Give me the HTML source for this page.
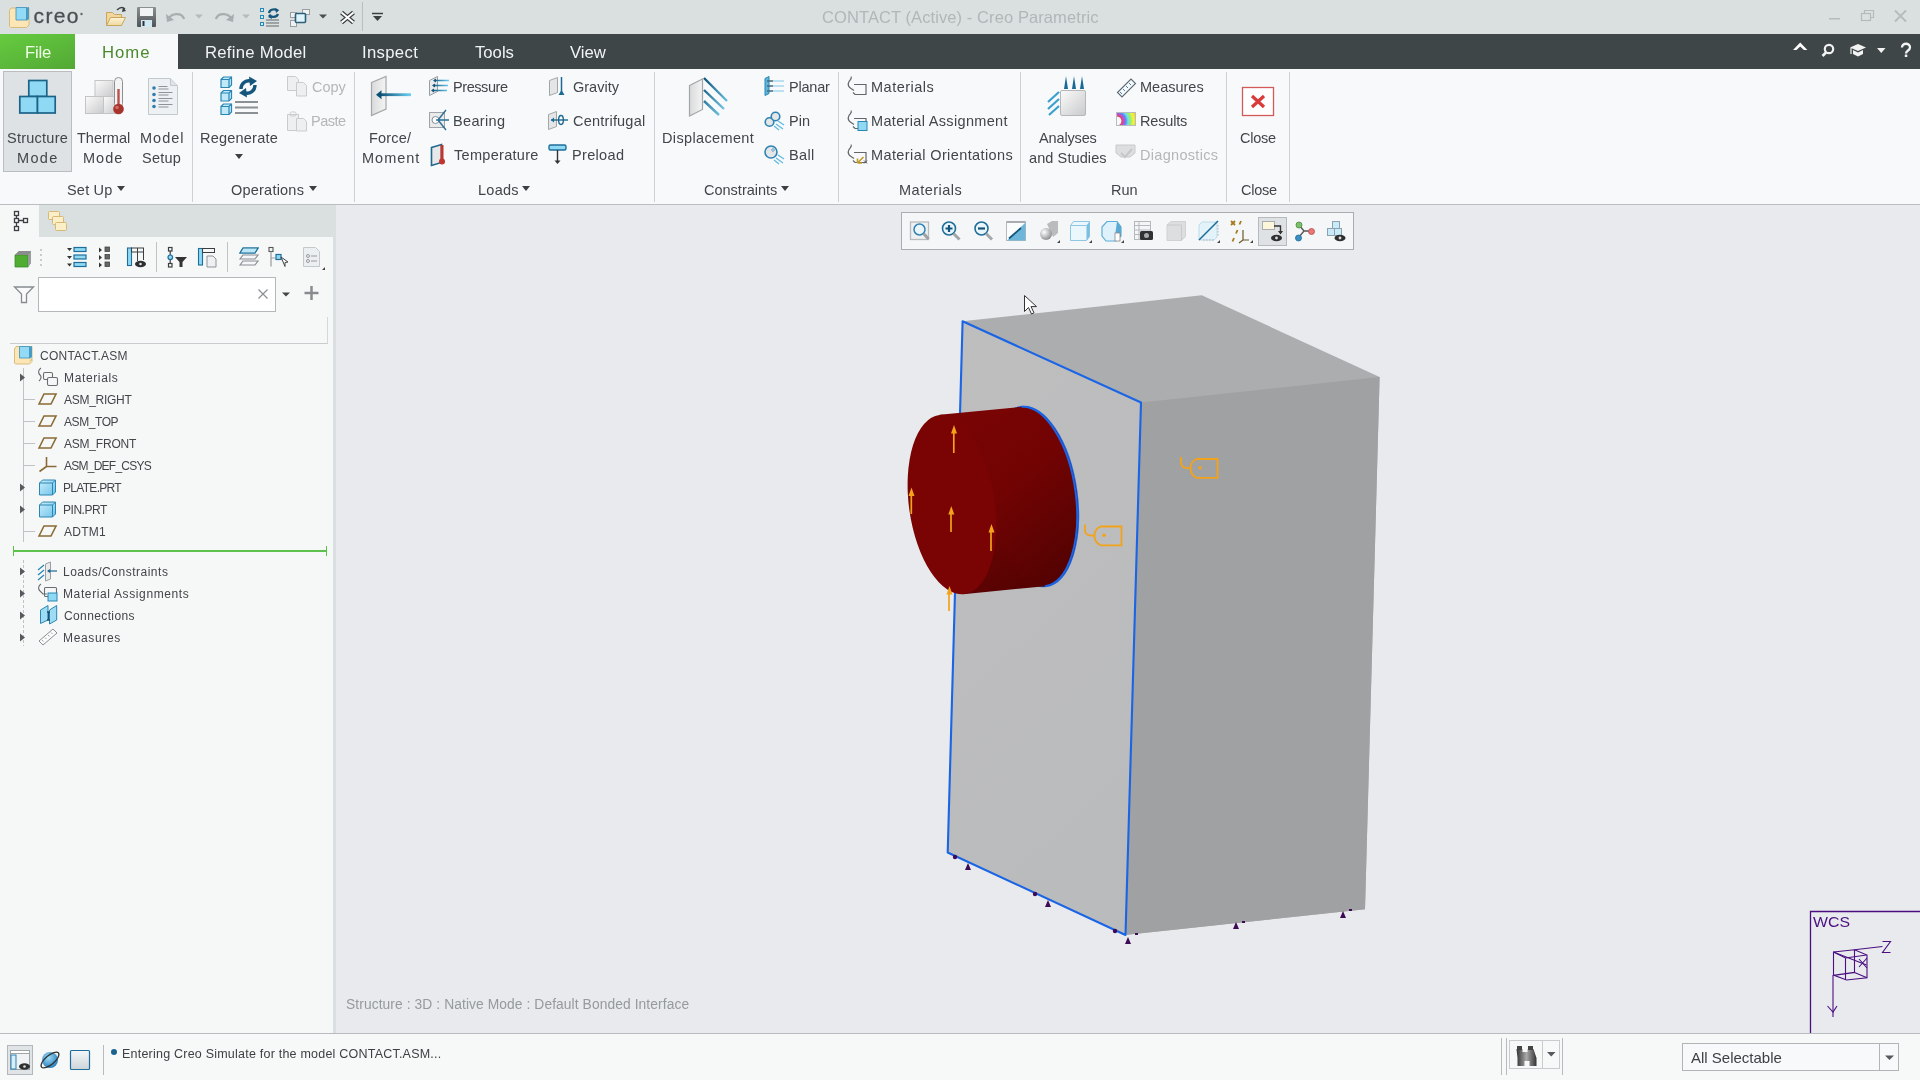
<!DOCTYPE html>
<html><head><meta charset="utf-8">
<style>
*{margin:0;padding:0;box-sizing:border-box}
html,body{width:1920px;height:1080px;overflow:hidden;background:#e8eaed;font-family:"Liberation Sans",sans-serif}
.a{position:absolute}
.t{position:absolute;white-space:nowrap;line-height:1;will-change:transform}
.rb{font-size:14.5px;color:#42464a}
.tb{font-size:16.7px;color:#f2f4f4}
.tr{font-size:12px;color:#42464a}
svg{position:absolute;overflow:visible}
</style></head><body>
<!-- title bar -->
<div class="a" style="left:0;top:0;width:1920px;height:34px;background:#d9e0df"></div>
<div class="t" style="left:821.5px;top:9px;font-size:16.5px;color:#b1b7b8;letter-spacing:0.09px">CONTACT (Active) - Creo Parametric</div>

<!-- tab bar -->
<div class="a" style="left:0;top:34px;width:1920px;height:35px;background:#3e4648"></div>
<div class="a" style="left:0;top:34px;width:75px;height:35px;background:linear-gradient(160deg,#66cc40,#52a834)"></div>
<div class="a" style="left:75px;top:34px;width:103px;height:35px;background:#f7f9fa"></div>
<div class="t tb" style="top:45px;left:24.6px;color:#efffe6;letter-spacing:-0.20px">File</div>
<div class="t tb" style="top:45px;left:102.0px;color:#4b8a2c;letter-spacing:1.00px">Home</div>
<div class="t tb" style="top:45px;left:205.0px;letter-spacing:0.27px">Refine Model</div>
<div class="t tb" style="top:45px;left:362.0px;letter-spacing:0.33px">Inspect</div>
<div class="t tb" style="top:45px;left:475.0px;letter-spacing:0.00px">Tools</div>
<div class="t tb" style="top:45px;left:570.0px;letter-spacing:0.00px">View</div>


<svg style="left:0;top:0" width="1920" height="70">
<defs>
<linearGradient id="gfold" x1="0" y1="0" x2="0" y2="1"><stop offset="0" stop-color="#fdf3d6"/><stop offset="1" stop-color="#f0d9a0"/></linearGradient>
<linearGradient id="gsave" x1="0" y1="0" x2="0" y2="1"><stop offset="0" stop-color="#8c9093"/><stop offset="1" stop-color="#4f5356"/></linearGradient>
</defs>
<!-- creo logo -->
<path d="M11 8h18v17l-2.5 2.5h-16l-1-1v-16z" fill="#fce6b6" stroke="#d9bb7c" stroke-width="1"/>
<rect x="16" y="7.5" width="11" height="12.5" fill="#92daf5"/>
<path d="M26.5 7.5l2.5-0.5v12l-2.5 2z" fill="#4a9cc8"/>
<path d="M16 7.5h10.5v12.5h-10.5z" fill="none" stroke="#3a8fbe" stroke-width=".8"/>
<text x="33.5" y="23" font-family="Liberation Sans" font-size="21" fill="#4a4e51" stroke="#4a4e51" stroke-width="0.3" letter-spacing="1.4">creo</text>
<circle cx="81.5" cy="14" r="1.2" fill="#666"/>
<!-- open folder -->
<path d="M106.5 12.5h6l2 2h7v11h-15z" fill="#f1d79c" stroke="#c9a660"/>
<path d="M106.5 25.5l4-8h15l-4 8z" fill="url(#gfold)" stroke="#c9a660"/>
<path d="M117 10c3-3 6-3 8-1" fill="none" stroke="#3c4043" stroke-width="1.4"/><path d="M123 7l3 4-4 1z" fill="#3c4043"/>
<!-- save -->
<rect x="137" y="7" width="19" height="20" rx="1" fill="url(#gsave)"/>
<rect x="140" y="8" width="13" height="8" fill="#f2f3f4"/>
<rect x="141" y="20" width="11" height="7" fill="#cfe8f4"/><rect x="142.5" y="21" width="2" height="5" fill="#333"/>
<!-- undo / redo (disabled) -->
<path d="M169 19c2-6 13-7 15 0" fill="none" stroke="#a8adb0" stroke-width="2.4"/><path d="M166 14l1 8 7-2z" fill="#a8adb0"/>
<path d="M195 14.5h8l-4 4z" fill="#b5babd"/>
<path d="M231 19c-2-6-13-7-15 0" fill="none" stroke="#a8adb0" stroke-width="2.4"/><path d="M234 14l-1 8-7-2z" fill="#a8adb0"/>
<path d="M242 14.5h8l-4 4z" fill="#b5babd"/>
<!-- regen -->
<g fill="#c9ecf9" stroke="#2a86b4" stroke-width="1"><rect x="260.5" y="8.5" width="3" height="3"/><rect x="260.5" y="15.5" width="3" height="3"/><rect x="260.5" y="22.5" width="3" height="3"/></g>
<path d="M269 13a5 4 0 0 1 9-2M278 14a5 4 0 0 1 -9 1" fill="none" stroke="#15577c" stroke-width="2.2"/>
<path d="M275 8l4 2-3 3zM272 19l-4-2 3-3z" fill="#15577c"/>
<g stroke="#8a9094" stroke-width="1.6"><path d="M266 20h13M266 23h13M266 26h13"/></g>
<!-- windows -->
<g fill="#f0f1f2" stroke="#9a9ea1" stroke-width="1"><rect x="290.5" y="12.5" width="6" height="5"/><rect x="290.5" y="20.5" width="6" height="6"/><rect x="302.5" y="9.5" width="7" height="5"/></g>
<rect x="295.5" y="13.5" width="10" height="9" rx="1" fill="#dff3fb" stroke="#2d5f7c" stroke-width="1.6"/>
<path d="M319 14.5h8l-4 4z" fill="#4a4e51"/>
<!-- close x -->
<path d="M341.5 12.5l12 10M353.5 12.5l-12 10" stroke="#3c4043" stroke-width="4.4"/>
<path d="M341.5 12.5l12 10M353.5 12.5l-12 10" stroke="#fff" stroke-width="2"/>
<rect x="362" y="2" width="1" height="29" fill="#b9bfc1"/>
<path d="M372 13.5h11" stroke="#3c4043" stroke-width="1.5"/><path d="M373 16h9l-4.5 5z" fill="#3c4043"/>
<!-- window controls -->
<rect x="1829" y="18" width="11" height="1.5" fill="#b5bbbd"/>
<g fill="none" stroke="#b5bbbd" stroke-width="1.2"><rect x="1861.5" y="13.5" width="9" height="7"/><path d="M1864.5 13.5v-3h9v7h-3"/></g>
<path d="M1895 10.5l11 11M1906 10.5l-11 11" stroke="#b5bbbd" stroke-width="1.8"/>
<!-- tab bar right icons -->
<path d="M1793 50l7.2-7.5 7.2 7.5h-3.5l-3.7-3.5-3.7 3.5z" fill="#fff"/>
<circle cx="1829" cy="49" r="4.2" fill="none" stroke="#f2f2f2" stroke-width="2.2"/>
<path d="M1826 52.5l-3.5 3.5" stroke="#f2f2f2" stroke-width="2.6"/>
<path d="M1850 47.5l8-3.5 8 3.5-8 3.5z" fill="#f2f2f2"/><path d="M1853 50v4l5 2.5 5-2.5v-4l-5 2.5z" fill="#f2f2f2"/><path d="M1851 48v6" stroke="#f2f2f2" stroke-width="1.2"/>
<path d="M1877 48h8.5l-4.25 5z" fill="#f2f2f2"/>
<path d="M1902 47.5c0-5 8-5 8 0 0 3-4 3-4 6" fill="none" stroke="#f4f4f4" stroke-width="2.3"/><rect x="1904.8" y="54.5" width="2.5" height="2.5" fill="#f4f4f4"/>
</svg>

<!-- ribbon -->
<div class="a" style="left:0;top:69px;width:1920px;height:135px;background:#f7f9fa"></div>
<div class="a" style="left:0;top:204px;width:1920px;height:1px;background:#b9bec0"></div>


<!-- ribbon separators -->
<div class="a" style="left:192px;top:72px;width:1px;height:130px;background:#cdd1d3"></div>
<div class="a" style="left:354px;top:72px;width:1px;height:130px;background:#cdd1d3"></div>
<div class="a" style="left:654px;top:72px;width:1px;height:130px;background:#cdd1d3"></div>
<div class="a" style="left:838px;top:72px;width:1px;height:130px;background:#cdd1d3"></div>
<div class="a" style="left:1020px;top:72px;width:1px;height:130px;background:#cdd1d3"></div>
<div class="a" style="left:1226px;top:72px;width:1px;height:130px;background:#cdd1d3"></div>
<div class="a" style="left:1289px;top:72px;width:1px;height:130px;background:#cdd1d3"></div>
<!-- structure mode pressed -->
<div class="a" style="left:3px;top:71px;width:69px;height:101px;background:#dfe2e4;border:1px solid #b9bdbf"></div>
<!-- ribbon labels -->
<div class="t rb" style="left:7.0px;top:131px;letter-spacing:0.25px">Structure</div>
<div class="t rb" style="left:17.0px;top:151px;letter-spacing:1.33px">Mode</div>
<div class="t rb" style="left:77.0px;top:131px;letter-spacing:0.00px">Thermal</div>
<div class="t rb" style="left:83.0px;top:151px;letter-spacing:1.00px">Mode</div>
<div class="t rb" style="left:140.0px;top:131px;letter-spacing:1.00px">Model</div>
<div class="t rb" style="left:142.0px;top:151px;letter-spacing:0.25px">Setup</div>
<div class="t rb" style="left:200.0px;top:131px;letter-spacing:0.22px">Regenerate</div>
<div class="t rb" style="left:312.0px;top:80px;color:#b3b7b9;letter-spacing:0.00px">Copy</div>
<div class="t rb" style="left:311.0px;top:114px;color:#b3b7b9;letter-spacing:-0.50px">Paste</div>
<div class="t rb" style="left:369.0px;top:131px;letter-spacing:0.20px">Force/</div>
<div class="t rb" style="left:362.0px;top:151px;letter-spacing:1.00px">Moment</div>
<div class="t rb" style="left:453.0px;top:80px;letter-spacing:-0.43px">Pressure</div>
<div class="t rb" style="left:453.0px;top:114px;letter-spacing:0.33px">Bearing</div>
<div class="t rb" style="left:454.0px;top:148px;letter-spacing:0.30px">Temperature</div>
<div class="t rb" style="left:573.0px;top:80px;letter-spacing:0.00px">Gravity</div>
<div class="t rb" style="left:573.0px;top:114px;letter-spacing:0.20px">Centrifugal</div>
<div class="t rb" style="left:572.0px;top:148px;letter-spacing:0.33px">Preload</div>
<div class="t rb" style="left:662.0px;top:131px;letter-spacing:0.36px">Displacement</div>
<div class="t rb" style="left:789.0px;top:80px;letter-spacing:-0.20px">Planar</div>
<div class="t rb" style="left:789.0px;top:114px;letter-spacing:0.00px">Pin</div>
<div class="t rb" style="left:789.0px;top:148px;letter-spacing:0.33px">Ball</div>
<div class="t rb" style="left:871.0px;top:80px;letter-spacing:0.50px">Materials</div>
<div class="t rb" style="left:871.0px;top:114px;letter-spacing:0.33px">Material Assignment</div>
<div class="t rb" style="left:871.0px;top:148px;letter-spacing:0.40px">Material Orientations</div>
<div class="t rb" style="left:1039.0px;top:131px;letter-spacing:-0.14px">Analyses</div>
<div class="t rb" style="left:1029.0px;top:151px;letter-spacing:0.10px">and Studies</div>
<div class="t rb" style="left:1140.0px;top:80px;letter-spacing:0.00px">Measures</div>
<div class="t rb" style="left:1140.0px;top:114px;letter-spacing:-0.17px">Results</div>
<div class="t rb" style="left:1140.0px;top:148px;color:#b3b7b9;letter-spacing:0.30px">Diagnostics</div>
<div class="t rb" style="left:1240.0px;top:131px;letter-spacing:-0.25px">Close</div>
<!-- group labels -->
<div class="t rb" style="left:67.0px;top:183px;letter-spacing:0.20px">Set Up</div>
<div class="t rb" style="left:231.0px;top:183px;letter-spacing:0.22px">Operations</div>
<div class="t rb" style="left:478.0px;top:183px;letter-spacing:0.25px">Loads</div>
<div class="t rb" style="left:704.0px;top:183px;letter-spacing:0.00px">Constraints</div>
<div class="t rb" style="left:899.0px;top:183px;letter-spacing:0.50px">Materials</div>
<div class="t rb" style="left:1111.0px;top:183px;letter-spacing:0.00px">Run</div>
<div class="t rb" style="left:1241.0px;top:183px;letter-spacing:-0.25px">Close</div>
<svg style="left:0;top:0" width="1920" height="210">
<g fill="#3b4043">
<path d="M117 186h8l-4 5z"/><path d="M309 186h8l-4 5z"/><path d="M522 186h8l-4 5z"/><path d="M781 186h8l-4 5z"/>
<path d="M235 154h8l-4 5z"/>
</g>
</svg>


<svg style="left:0;top:0" width="1920" height="210">
<defs>
<linearGradient id="gbox" x1="0" y1="0" x2="1" y2="1"><stop offset="0" stop-color="#fbfbfb"/><stop offset="1" stop-color="#c9cacb"/></linearGradient>
<linearGradient id="garr" x1="0" y1="0" x2="1" y2="0"><stop offset="0" stop-color="#0d4f74"/><stop offset="1" stop-color="#6cd0f4"/></linearGradient>
<linearGradient id="gplate" x1="0" y1="0" x2="1" y2="0"><stop offset="0" stop-color="#d9dadb"/><stop offset="1" stop-color="#f4f4f4"/></linearGradient>
<linearGradient id="gdisp" x1="0" y1="0" x2="1" y2="1"><stop offset="0" stop-color="#0e5378"/><stop offset="1" stop-color="#7fd6f5"/></linearGradient>
<linearGradient id="grain" x1="0" y1="0" x2="1" y2="0"><stop offset="0" stop-color="#3a58d8"/><stop offset=".3" stop-color="#e040a0"/><stop offset=".55" stop-color="#40d0e8"/><stop offset=".75" stop-color="#e8e830"/><stop offset="1" stop-color="#f09020"/></linearGradient>
</defs>
<!-- Structure mode -->
<g fill="#8fd9f5" stroke="#1d6388" stroke-width="1.7">
<rect x="28.8" y="80.5" width="18" height="16"/><rect x="19.8" y="96.5" width="17.7" height="16.5"/><rect x="37.5" y="96.5" width="17.7" height="16.5"/>
</g>
<!-- Thermal mode -->
<g stroke="#c2c4c6" stroke-width="1" fill="url(#gbox)">
<rect x="95" y="80.5" width="18" height="16"/><rect x="85.5" y="96.5" width="18" height="17"/><rect x="103.5" y="96.5" width="12" height="17"/>
</g>
<rect x="114.5" y="77.5" width="8" height="30" rx="4" fill="#f4f4f4" stroke="#8d8f91"/>
<rect x="117.3" y="89" width="2.4" height="17" fill="#b9514b"/>
<circle cx="118.5" cy="109" r="5.3" fill="#a9342e"/><circle cx="117" cy="107.5" r="1.8" fill="#d06a62"/>
<!-- Model setup -->
<path d="M148.5 78.5h22l7 7v29h-29z" fill="#edf1f4" stroke="#c3c8cc"/>
<path d="M170.5 78.5v7h7" fill="#dfe4e8" stroke="#c3c8cc"/>
<g fill="#2f7fae"><circle cx="154" cy="88" r="1.8"/><circle cx="154" cy="94.5" r="1.8"/><circle cx="154" cy="100.5" r="1.8"/><circle cx="154" cy="106.5" r="1.8"/></g>
<g stroke="#8e9499" stroke-width="1.2"><path d="M158.5 86.5h9M158.5 89h10M158.5 92.5h14M158.5 95h10M158.5 98.5h14M158.5 101h10M158.5 104.5h14M158.5 107h10"/></g>
<!-- Regenerate -->
<g stroke="#2a86b4" stroke-width="1.2"><path d="M221 79.5l2.5-2.5h8v8l-2.5 2.5h-8z" fill="#bfe9f9"/><path d="M221 79.5h8v8M229 79.5l2.5-2.5" fill="none"/>
<path d="M221 93l2.5-2.5h8v8l-2.5 2.5h-8z" fill="#bfe9f9"/><path d="M221 93h8v8M229 93l2.5-2.5" fill="none"/>
<path d="M221 106.5l2.5-2.5h8v8l-2.5 2.5h-8z" fill="#bfe9f9"/><path d="M221 106.5h8v8M229 106.5l2.5-2.5" fill="none"/></g>
<g fill="none" stroke="#15577c" stroke-width="3.4" stroke-linecap="butt"><path d="M241 89c0-6 5-9 10-8"/><path d="M255 85c0 6-5 9-10 8"/></g>
<path d="M249 76.5l8 4.5-7 5z" fill="#15577c"/><path d="M247 97.5l-8-4.5 7-5z" fill="#15577c"/>
<g stroke="#8a9094" stroke-width="2.2"><path d="M235 102h23M235 107.5h23M235 113h23"/></g>
<!-- Copy / paste (disabled) -->
<g fill="#eeeff0" stroke="#c9cccd"><path d="M287.5 76.5h8l3 3v11h-11z"/><path d="M296.5 82.5h7l3 3v10.5h-10z"/>
<path d="M287.5 114.5h11v16h-11z"/><path d="M296.5 118.5h7l3 3v9.5h-10z"/></g>
<rect x="290" y="112" width="6" height="4" rx="1.5" fill="none" stroke="#c9cccd"/>
<!-- Force/Moment -->
<path d="M371.5 82.5l14.5-6v32.5l-14.5 6.5z" fill="url(#gplate)" stroke="#a4a7a9" stroke-width="1.2"/>
<rect x="380" y="93.3" width="31" height="2.8" fill="url(#garr)"/>
<path d="M376 94.7l5.5-4.5v9z" fill="#0d4f74"/>
<!-- Pressure -->
<path d="M429.5 80.5l8-4v15l-8 4z" fill="#e9eaeb" stroke="#9a9ea2"/>
<g stroke="url(#garr)" stroke-width="1.5"><path d="M434 80.5h15M433 85.5h15M432 90.5h15"/></g>
<g fill="#15577c"><path d="M433 80.5l3-2v4zM432 85.5l3-2v4zM431 90.5l3-2v4z"/></g>
<!-- Bearing -->
<rect x="429.5" y="112.5" width="15" height="15" fill="#e9eaeb" stroke="#a0a4a8"/>
<circle cx="435.5" cy="120" r="3.5" fill="#fff" stroke="#8a9094"/>
<g stroke="#2a6f96" stroke-width="1.4" fill="none"><path d="M446 110l-8 10 8 10M436 120h13"/></g>
<!-- Temperature -->
<path d="M431.5 147.5l10-3v18l-10 3z" fill="#e7e8e9" stroke="#1f6890" stroke-width="1.6"/>
<rect x="440.5" y="145" width="3" height="15" fill="#c0352e"/><circle cx="442" cy="161.5" r="3" fill="#c0352e"/>
<!-- Gravity -->
<path d="M549.5 80.5l8-3v15l-8 3z" fill="#e4e5e6" stroke="#a3a6a8"/>
<path d="M561.5 77v17" stroke="#1a6a96" stroke-width="1.5"/><path d="M558.5 95h6l-3-5z" fill="#1a6a96"/>
<!-- Centrifugal -->
<path d="M548.5 114.5l8-3v15l-8 3z" fill="#e4e5e6" stroke="#a3a6a8"/>
<path d="M551 120h17" stroke="#1f6890" stroke-width="1.4"/><ellipse cx="561" cy="120" rx="2.4" ry="4.5" fill="none" stroke="#1f6890" stroke-width="1.4"/><path d="M551 120l3-2.5v5z" fill="#1f6890"/>
<!-- Preload -->
<rect x="549" y="145" width="17" height="5" rx="1.5" fill="#8fd9f5" stroke="#1f6e9a" stroke-width="1.4"/>
<path d="M557.5 150v12" stroke="#333" stroke-width="1.4"/><path d="M554.5 160.5h6l-3 3.5z" fill="#333"/>
<!-- Displacement -->
<path d="M689.5 85.5l13-6.5v30.5l-13 6.5z" fill="url(#gplate)" stroke="#a4a7a9" stroke-width="1.2"/>
<g stroke="url(#gdisp)" stroke-width="2.4"><path d="M704 78l23 23M704 90l20 19M704 101l15 14"/></g>
<!-- Planar -->
<path d="M765 78.5l4-2v17l-4 2z" fill="#5ab6dc" stroke="#2a86b4"/>
<g stroke="#7fc8e8" stroke-width="1.1"><path d="M767 81h17M767 86h17M767 91h17"/></g><g stroke="#2b3a44" stroke-width="1.1"><path d="M767 81h6M767 86h6M767 91h6"/></g>
<!-- Pin -->
<g fill="#e4e7e8" stroke="#2f83b3" stroke-width="1.6"><circle cx="769.5" cy="122" r="4.3"/><circle cx="775.5" cy="116.5" r="4.3"/></g>
<g stroke="#5fb9e0" stroke-width="1.2"><path d="M776 124l7 5M778 121l6 4M774 126l5 4"/></g>
<!-- Ball -->
<circle cx="771" cy="152" r="6" fill="#e4e7e8" stroke="#2f83b3" stroke-width="1.6"/><path d="M773 148.5l1.5 1.5-1.5 1.5-1.5-1.5z" fill="none" stroke="#2f83b3" stroke-width=".8"/>
<g stroke="#5fb9e0" stroke-width="1.2"><path d="M776 158l7 5M778 155l6 4M774 160l5 4"/></g>
<!-- Materials -->
<g fill="none" stroke="#62676b" stroke-width="1.2">
<path d="M851 76.5c1.5 2-1 3-2 5s-1 5 2 7l3 2"/><path d="M854 84.5h12v10h-11l-2-2"/>
<path d="M851 110.5c1.5 2-1 3-2 5s-1 5 2 7l3 2"/><path d="M854 118.5h12v10h-11l-2-2"/>
<path d="M851 144.5c1.5 2-1 3-2 5s-1 5 2 7l3 2"/><path d="M854 152.5h12v10h-11l-2-2"/>
</g>
<rect x="858" y="121.5" width="9" height="9" fill="#8fd9f5" stroke="#2a86b4"/>
<path d="M857.5 163l6-6M857.5 163v-4.5M857.5 163h4.5" stroke="#c39a2a" stroke-width="1.6" fill="none"/>
<path d="M864 160.5l3 3M867 160.5l-3 3" stroke="#555" stroke-width=".9"/>
<!-- Analyses -->
<g fill="#1a6a96"><path d="M1066 76l-2 13h4z"/><path d="M1074 76l-2 13h4z"/><path d="M1082 76l-2 13h4z"/></g>
<rect x="1060.5" y="90.5" width="25" height="25" rx="1.5" fill="url(#gbox)" stroke="#b5b8ba"/>
<g stroke="#3aa0cf" stroke-width="2.2"><path d="M1048 102l11-10M1048 109l11-10M1049 115l10-9"/></g>
<!-- Measures -->
<path d="M1117.5 92.5l13.5-13.5 4.5 4.5-13.5 13.5z" fill="#f6f8f9" stroke="#5a6a76" stroke-width="1.1"/>
<g stroke="#3f86b2" stroke-width="1"><path d="M1120 92l2 2M1123 89l2 2M1126 86l2 2M1129 83l2 2"/></g>
<!-- Results -->
<radialGradient id="grain2" gradientUnits="userSpaceOnUse" cx="1117" cy="121" r="20"><stop offset="0" stop-color="#f7f9fa"/><stop offset=".2" stop-color="#f7f9fa"/><stop offset=".24" stop-color="#d84a6a"/><stop offset=".34" stop-color="#c84ac8"/><stop offset=".44" stop-color="#5a8af0"/><stop offset=".56" stop-color="#70e0f0"/><stop offset=".68" stop-color="#90f070"/><stop offset=".82" stop-color="#f4f438"/><stop offset="1" stop-color="#f0c030"/></radialGradient>
<rect x="1116.5" y="112.5" width="19" height="13" fill="url(#grain2)" stroke="#b9bcbe" stroke-width="1"/>
<!-- Diagnostics disabled -->
<path d="M1116 145h19v8l-5 4h-9l-5-4z" fill="#dcdedf" stroke="#c8cacb"/>
<path d="M1121 153l4 4 7-8" stroke="#c4c6c8" stroke-width="2" fill="none"/>
<!-- Close -->
<rect x="1242.5" y="87.5" width="31" height="28" fill="#fff" stroke="#d45a5a" stroke-width="1.3"/>
<path d="M1252 96l12 11M1264 96l-12 11" stroke="#d93a3a" stroke-width="3.2"/>
</svg>

<!-- left panel -->
<div class="a" style="left:0;top:205px;width:333px;height:828px;background:#f6f8f8"></div>
<div class="a" style="left:333px;top:205px;width:3px;height:828px;background:#dcdfe1"></div>
<div class="a" style="left:39px;top:205px;width:297px;height:32px;background:#d9e0df"></div>



<div class="a" style="left:38px;top:277px;width:238px;height:35px;background:#fff;border:1px solid #b4b8ba"></div>
<div class="a" style="left:10px;top:317px;width:318px;height:27px;border-right:1px solid #d5d8da;border-bottom:1px solid #c9ccce"></div>
<div class="a" style="left:13px;top:550px;width:314px;height:2px;background:#5dc24b"></div><div class="a" style="left:13px;top:546px;width:1px;height:10px;background:#5dc24b"></div><div class="a" style="left:326px;top:546px;width:1px;height:10px;background:#5dc24b"></div>
<svg style="left:0;top:0" width="340" height="1080">
<defs>
<linearGradient id="gcube" x1="0" y1="0" x2="1" y2="1"><stop offset="0" stop-color="#c8eefc"/><stop offset="1" stop-color="#6fc3e8"/></linearGradient>
</defs>
<!-- tab icons -->
<g fill="none" stroke="#3c3f42" stroke-width="1.3"><rect x="14.5" y="211.5" width="4" height="4"/><rect x="14.5" y="218.5" width="4" height="4"/><rect x="14.5" y="226.5" width="4" height="4"/><rect x="23.5" y="218.5" width="4" height="4"/><path d="M16.5 215.5v3M16.5 222.5v4M18.5 220.5h5"/></g>
<g fill="#fbefc8" stroke="#d6b878" stroke-width="1"><rect x="48.5" y="211.5" width="11" height="8" rx="1"/><rect x="52.5" y="216.5" width="11" height="8" rx="1"/><rect x="55.5" y="222.5" width="11" height="8" rx="1"/></g>
<!-- toolbar row -->
<path d="M15 255l4-4h12v12l-3 4h-13z" fill="#5cb63c"/><path d="M15 255h13v12h-13z" fill="#4fae32" stroke="#3c8c28" stroke-width=".8"/><path d="M15 255l4-4h12l-3 4z" fill="#8a8c8e"/><path d="M28 255l3-4v12l-3 4z" fill="#9a9c9e"/>
<g fill="#c9ccce"><rect x="40" y="249" width="2" height="2"/><rect x="40" y="254" width="2" height="2"/><rect x="40" y="259" width="2" height="2"/><rect x="40" y="264" width="2" height="2"/></g>
<g fill="#333"><path d="M67 248h5l-2.5 3z M67 256h5l-2.5 3z M67 263.5h5l-2.5 3z"/></g>
<g fill="#8fd9f5" stroke="#1f6e9a" stroke-width="1.2"><rect x="74" y="247.5" width="12" height="4"/><rect x="74" y="255" width="12" height="4"/><rect x="74" y="262.5" width="12" height="4"/></g>
<g fill="#333"><path d="M99 247.5v5l3-2.5z M99 255v5l3-2.5z M99 262.5v5l3-2.5z"/></g>
<g fill="#666" stroke="#444" stroke-width=".8"><rect x="105" y="247" width="4.5" height="4.5"/><rect x="105" y="254.5" width="4.5" height="4.5"/><rect x="105" y="262" width="4.5" height="4.5"/></g>
<rect x="127.5" y="248" width="4" height="17.5" fill="#8fd9f5" stroke="#1f6e9a" stroke-width="1.1"/>
<g fill="none" stroke="#3c3f42" stroke-width="1"><rect x="131.5" y="248" width="12" height="4"/><path d="M137.5 248v13M143.5 252v8"/></g>
<ellipse cx="140.5" cy="264" rx="5.5" ry="3.2" fill="#2d2f31"/><circle cx="140.5" cy="264" r="1.3" fill="#ddd"/>
<rect x="156" y="242" width="1" height="30" fill="#bfc3c5"/>
<rect x="227" y="242" width="1" height="30" fill="#bfc3c5"/>
<g fill="none" stroke="#3c3f42" stroke-width="1.2"><rect x="168.5" y="247.5" width="3.5" height="3.5"/><rect x="168.5" y="263.5" width="3.5" height="3.5"/><path d="M170.2 251v4.5M170.2 260v3.5"/></g>
<circle cx="170.3" cy="257.3" r="2.3" fill="#8fd9f5" stroke="#1f6e9a" stroke-width="1.2"/>
<path d="M175 257h12l-4.5 5v5h-3v-5z" fill="#333"/>
<rect x="198.5" y="248.5" width="4" height="16.5" fill="#8fd9f5" stroke="#1f6e9a" stroke-width="1.1"/>
<g fill="none" stroke="#3c3f42" stroke-width="1"><rect x="202.5" y="248.5" width="12" height="4"/></g>
<path d="M207 256h6l3 3v8h-9z" fill="#eef0f1" stroke="#909498"/>
<g fill="#dff4fc" stroke="#2f83b3" stroke-width="1.2"><path d="M240 253l3-5h15l-3 5z"/></g>
<g fill="#f6f7f8" stroke="#8a8e92" stroke-width="1.2"><path d="M240 259l3-4h15l-3 4z M240 265l3-4h15l-3 4z"/></g>
<path d="M240 253l3-5h15l-3 5z" fill="#bde7f7" stroke="#1f6e9a" stroke-width="1.2"/>
<rect x="269" y="247.5" width="4" height="4" fill="none" stroke="#555" stroke-width="1.1"/>
<path d="M271 251.5v15M271 258h4" stroke="#999" stroke-width="1.2"/>
<rect x="276" y="254.5" width="5" height="5" fill="#8fd9f5" stroke="#1f6e9a" stroke-width="1.2"/>
<path d="M281 257l7 5-3 .5 0 4z" fill="#fff" stroke="#444" stroke-width="1"/>
<path d="M303.5 247.5h12l4 4v15h-16z" fill="#eceff1" stroke="#c4c8cb"/>
<g stroke="#999" fill="none" stroke-width="1"><circle cx="308" cy="256" r="1.5"/><circle cx="308" cy="261" r="1.5"/><path d="M311 256h6M311 261h6"/></g>
<path d="M322 270h3v-3z" fill="#444"/>
<!-- search row -->
<path d="M14.5 287h19l-7 7v8.5h-5v-8.5z" fill="#fafafa" stroke="#888c8f" stroke-width="1.3"/>
<path d="M258.5 289.5l9 9M267.5 289.5l-9 9" stroke="#8a8e91" stroke-width="1.2"/>
<path d="M282 292.5h8l-4 4z" fill="#444"/>
<path d="M304.5 293h14M311.5 286v14" stroke="#888c8f" stroke-width="2.5"/>
<!-- tree lines -->
<path d="M23.5 368v174" stroke="#bfc3c6" stroke-width="1"/>
<g stroke="#bfc3c6"><path d="M24 399.5h11M24 421.5h11M24 443.5h11M24 465.5h11M24 531.5h11"/></g>
<path d="M23.5 560v86" stroke="#bfc3c6" stroke-width="1" stroke-dasharray="3 2"/>
<!-- expanders -->
<g fill="#555a5e"><path d="M20 373.5v8l5-4z"/><path d="M20 483.5v8l5-4z"/><path d="M20 505.5v8l5-4z"/><path d="M20 567.5v8l5-4z"/><path d="M20 589.5v8l5-4z"/><path d="M20 611.5v8l5-4z"/><path d="M20 633.5v8l5-4z"/></g>
<!-- CONTACT.ASM icon -->
<path d="M16 346.5h16v15l-2.5 2.5h-14l-1-1v-14z" fill="#fce6b6" stroke="#d9bb7c" stroke-width="1"/>
<path d="M29.5 361.5l2.5-2.5" stroke="#d9bb7c"/>
<rect x="19.5" y="346.5" width="10" height="11.5" fill="#92daf5"/>
<path d="M29.5 346.5l2.5-0.5v11l-2.5 2z" fill="#4a9cc8"/>
<path d="M19.5 346.5h10v11.5h-10z" fill="none" stroke="#3a8fbe" stroke-width=".8"/>
<!-- Materials icon -->
<g fill="none" stroke="#6a6e72" stroke-width="1.1"><path d="M41 368c-3 2-3 5-1 7s1 4-1 6"/><rect x="43.5" y="372.5" width="9" height="7" rx="1.5"/><rect x="47.5" y="377.5" width="10" height="8" rx="1.5" fill="#f4f6f7"/></g>
<!-- datum planes -->
<g fill="none" stroke="#8b6a35" stroke-width="1.6"><path d="M39 404l5-10h12l-5 10z"/><path d="M39 426l5-10h12l-5 10z"/><path d="M39 448l5-10h12l-5 10z"/><path d="M39 536l5-10h12l-5 10z"/></g>
<!-- csys -->
<g stroke="#8b6a35" stroke-width="1.6" fill="none"><path d="M46.5 457v9.5l10 0M46.5 466.5l-7 5"/></g>
<!-- part cubes -->
<g><path d="M39.5 483l3-3h13v12l-3 3h-13z" fill="url(#gcube)" stroke="#2a86b4"/><path d="M39.5 483h13v12M52.5 483l3-3" fill="none" stroke="#2a86b4"/></g>
<g><path d="M39.5 505l3-3h13v12l-3 3h-13z" fill="url(#gcube)" stroke="#2a86b4"/><path d="M39.5 505h13v12M52.5 505l3-3" fill="none" stroke="#2a86b4"/></g>
<!-- loads/constraints icon -->
<path d="M45.5 564l5-2v17l-5 2z" fill="#e9eaeb" stroke="#9a9ea2"/>
<g stroke="#2a86b4" stroke-width="1.3"><path d="M38 570l6-5M38 575l6-5M38 580l6-5"/></g>
<path d="M48 571h9" stroke="#1f6890" stroke-width="1.2"/><path d="M47 571l3-2v4z" fill="#1f6890"/>
<!-- material assignments -->
<g fill="none" stroke="#6a6e72" stroke-width="1.1"><path d="M41 584c-3 2-3 5-1 7"/><path d="M40 591l3 3h4"/><rect x="44.5" y="587.5" width="12" height="9" rx="1"/></g>
<rect x="48" y="593" width="9" height="8" fill="#8fd9f5" stroke="#2a86b4"/>
<!-- connections -->
<path d="M40.5 610l7.5-4.5v14.5l-7.5 3.5z M49.5 610l7.2-4.5v14.5l-7.2 4z" fill="#9edcf4" stroke="#2a86b4" stroke-width="1"/>
<path d="M47 612h3M48.5 612v8M47 620h3" stroke="#1f4f70" stroke-width="1.3"/>
<!-- measures ruler -->
<path d="M39 641l14-12 4 4-14 12z" fill="#fbfbfb" stroke="#8a8e92" stroke-width="1"/>
<g stroke="#8a8e92" stroke-width=".8"><path d="M42 640l1.5 1.5M45 637.5l1.5 1.5M48 635l1.5 1.5M51 632.5l1.5 1.5"/></g>
</svg>
<div class="t tr" style="left:39.5px;top:350px;letter-spacing:0.24px">CONTACT.ASM</div>
<div class="t tr" style="left:63.5px;top:372px;letter-spacing:0.64px">Materials</div>
<div class="t tr" style="left:64.0px;top:394px;letter-spacing:-0.27px">ASM_RIGHT</div>
<div class="t tr" style="left:64.0px;top:416px;letter-spacing:-0.42px">ASM_TOP</div>
<div class="t tr" style="left:64.0px;top:438px;letter-spacing:-0.21px">ASM_FRONT</div>
<div class="t tr" style="left:64.0px;top:460px;letter-spacing:-0.75px">ASM_DEF_CSYS</div>
<div class="t tr" style="left:63.0px;top:482px;letter-spacing:-0.70px">PLATE.PRT</div>
<div class="t tr" style="left:63.0px;top:504px;letter-spacing:-0.47px">PIN.PRT</div>
<div class="t tr" style="left:64.0px;top:526px;letter-spacing:0.23px">ADTM1</div>
<div class="t tr" style="left:63.0px;top:566px;letter-spacing:0.51px">Loads/Constraints</div>
<div class="t tr" style="left:63.0px;top:588px;letter-spacing:0.62px">Material Assignments</div>
<div class="t tr" style="left:64.0px;top:610px;letter-spacing:0.38px">Connections</div>
<div class="t tr" style="left:63.0px;top:632px;letter-spacing:0.66px">Measures</div>

<!-- graphics area -->
<div class="a" style="left:336px;top:205px;width:1584px;height:828px;background:#e8eaed"></div>
<svg style="left:0;top:0" width="1920" height="1080">
<defs>
<linearGradient id="gfront" x1="0" y1="0" x2="0.3" y2="1"><stop offset="0" stop-color="#bebebf"/><stop offset="1" stop-color="#babbbc"/></linearGradient>
<linearGradient id="gside" gradientUnits="userSpaceOnUse" x1="960" y1="420" x2="1060" y2="590"><stop offset="0" stop-color="#790404"/><stop offset="0.4" stop-color="#720303"/><stop offset="1" stop-color="#500202"/></linearGradient>
</defs>
<polygon points="962.6,321.3 1201.8,295.3 1379.6,377 1365,909.2 1125.5,935 947.7,852.5" fill="#acadae"/>
<polygon points="1139,402.7 1379.6,377 1365,909.2 1124,935" fill="#a0a1a2"/>
<polygon points="962.6,321.3 1141,402.5 1125.5,935 947.7,852.5" fill="url(#gfront)"/>
<polygon points="962.6,321.3 1141,402.5 1125.5,935 947.7,852.5" fill="none" stroke="#1a64e6" stroke-width="2.1" stroke-linejoin="round"/>
<!-- cylinder -->
<ellipse cx="1033.3" cy="496.5" rx="43.5" ry="90.5" transform="rotate(-8 1033.3 496.5)" fill="#5e0303" stroke="#1a64e6" stroke-width="1.9"/>
<polygon points="939.8,414.8 1021.6,406.8 1045,586.2 963.2,594.2" fill="url(#gside)"/>
<ellipse cx="1033.3" cy="496.5" rx="43.5" ry="90.5" transform="rotate(-8 1033.3 496.5)" fill="url(#gside)"/>
<path d="M1021.6 406.8 A43.5 90.5 -8 0 1 1045 586.2" fill="none" stroke="#1a64e6" stroke-width="1.9"/>
<ellipse cx="952" cy="504.5" rx="43" ry="90.5" transform="rotate(-8 952 504.5)" fill="#7a0303"/>
<!-- orange arrows -->
<g stroke="#f2a31b" stroke-width="1.7" fill="#f2a31b">
<path d="M953.8 432v21"/><path d="M954 425l-3 8.5h6z" stroke="none"/>
<path d="M911.3 495v19"/><path d="M911.5 487.5l-3 8.5h6z" stroke="none"/>
<path d="M951 514v18"/><path d="M951.3 506l-3 8.5h6z" stroke="none"/>
<path d="M991 532v19"/><path d="M991.5 524l-3 8.5h6z" stroke="none"/>
<path d="M949 594v17"/><path d="M949.5 586l-3 8.5h6z" stroke="none"/>
</g>
<!-- tags -->
<g fill="none" stroke="#f2a31b" stroke-width="1.8" id="tag2">
<path d="M1085 524.5v6c0 4 4 5.5 9.5 5"/>
<path d="M1100.5 526.5h21v18.8h-21c-4 -2 -6 -5.5 -6 -9.5s2 -7.5 6 -9.3z"/>
</g>
<circle cx="1104" cy="535.2" r="1.8" fill="#f2a31b"/>
<g transform="translate(96,-67.5)">
<g fill="none" stroke="#f2a31b" stroke-width="1.8">
<path d="M1085 524.5v6c0 4 4 5.5 9.5 5"/>
<path d="M1100.5 526.5h21v18.8h-21c-4 -2 -6 -5.5 -6 -9.5s2 -7.5 6 -9.3z"/>
</g>
<circle cx="1104" cy="535.2" r="1.8" fill="#f2a31b"/>
</g>
<!-- constraint markers -->
<g fill="#3d0a55">
<circle cx="955" cy="857" r="2.2"/><path d="M968 863l-3 7h6z"/>
<circle cx="1035" cy="894" r="2.2"/><path d="M1048 900l-3 7h6z"/>
<circle cx="1115" cy="931" r="2.2"/><path d="M1128 937l-3 7h6z"/>
<path d="M1236 922l-3 7h6z"/><rect x="1242" y="921" width="3" height="2"/>
<path d="M1343 911l-3 7h6z"/><rect x="1349" y="909" width="3" height="2"/>
<path d="M1134 934l3 2"/><rect x="1135" y="933" width="3" height="2"/>
</g>
<!-- cursor -->
<path d="M1024.5 295.5v16l4-4 3 6.5 2.5-1.2-3-6.2h5.5z" fill="#fff" stroke="#333" stroke-width="1"/>
</svg>


<!-- view toolbar -->
<div class="a" style="left:901px;top:212px;width:453px;height:38px;background:#f5f6f7;border:1px solid #a9adb0"></div>
<div class="a" style="left:1258px;top:217px;width:29px;height:29px;background:#dfe2e4;border:1px solid #b6babd"></div>
<svg style="left:0;top:0" width="1920" height="260">
<defs>
<linearGradient id="glb" x1="0" y1="0" x2="1" y2="1"><stop offset="0" stop-color="#e8f7fd"/><stop offset="1" stop-color="#7cc4e4"/></linearGradient>
<radialGradient id="gsph" cx=".35" cy=".35" r=".7"><stop offset="0" stop-color="#ffffff"/><stop offset="1" stop-color="#8a8c8e"/></radialGradient>
</defs>
<!-- 1 zoom fit -->
<rect x="910.5" y="222" width="18" height="17.5" fill="#eef0f1" stroke="#b9bcbe" stroke-width="1.3"/>
<circle cx="919.5" cy="229.5" r="5.5" fill="#eaf6fb" stroke="#2f83b3" stroke-width="1.5"/>
<path d="M923.5 233.5l5 5.5" stroke="#9da1a4" stroke-width="3"/>
<!-- 2 zoom in -->
<circle cx="949" cy="228.5" r="6.5" fill="#eaf6fb" stroke="#1f6e9a" stroke-width="1.6"/>
<path d="M945.5 228.5h7M949 225v7" stroke="#13557a" stroke-width="2.2"/>
<path d="M953.5 233.5l6 6" stroke="#a3a6a9" stroke-width="3"/>
<!-- 3 zoom out -->
<circle cx="981.5" cy="228.5" r="6.5" fill="#eaf6fb" stroke="#1f6e9a" stroke-width="1.6"/>
<path d="M978 228.5h7" stroke="#13557a" stroke-width="2.2"/>
<path d="M986 233.5l6 6" stroke="#a3a6a9" stroke-width="3"/>
<!-- 4 repaint -->
<rect x="1006.5" y="222" width="19" height="18.5" fill="#fbfcfd" stroke="#b5b9bc" stroke-width="1"/>
<path d="M1007 240.5l18.5-18v18z" fill="#6db6da"/>
<path d="M1006.5 222h19" stroke="#a9adb0" stroke-width="2"/>
<path d="M1009 238.5l12-10.5" stroke="#15577c" stroke-width="1.8"/>
<!-- 5 spheres -->
<path d="M1047 224l5-3h6v12l-5 4z" fill="#b9bbbd"/>
<circle cx="1046" cy="234" r="6" fill="url(#gsph)"/>
<path d="M1057 243h3v-3z" fill="#444"/>
<!-- 6 cube -->
<path d="M1070.5 225.5l3-4h16v15l-3 4h-16z" fill="#eaf7fd" stroke="#8fc6e2" stroke-width="1"/>
<path d="M1086.5 225.5l3-4v15l-3 4z" fill="#7bbfe0"/>
<path d="M1070.5 225.5h16" stroke="#8fc6e2"/>
<path d="M1089 243h3v-3z" fill="#444"/>
<!-- 7 cube hex -->
<path d="M1102 227l5-5.5h10l4 5.5v9l-5 5h-10l-4-5z" fill="#dff2fb" stroke="#5fb0d6" stroke-width="1.2"/>
<path d="M1117 221.5l4 5.5v9h-6z" fill="#5aa9d3"/>
<rect x="1115" y="233" width="5" height="8" fill="#fff" stroke="#888" stroke-width=".8"/>
<path d="M1121 243h3v-3z" fill="#444"/>
<!-- 8 table camera -->
<g stroke="#b6b9bc" fill="#f4f5f6" stroke-width="1"><rect x="1134.5" y="221.5" width="16" height="18"/><path d="M1134.5 225.5h16M1134.5 230h16M1134.5 234.5h16M1139 221.5v18"/></g>
<rect x="1140" y="231" width="13" height="9" rx="1.5" fill="#2f3133"/><circle cx="1146.5" cy="235.5" r="2.5" fill="#aaa"/>
<!-- 9 gray cube disabled -->
<path d="M1167 225l4-3.5h14.5v15l-4 4h-14.5z" fill="#dcdedf" stroke="#cfd1d3"/>
<path d="M1167 225h14.5v15.5" fill="none" stroke="#c8cacc"/>
<!-- 10 datum -->
<path d="M1199 225l3-3h15v15l-3 3h-15z" fill="#e3f3fa" stroke="#bcdcec"/>
<path d="M1199 240l19-19" stroke="#1f6e9a" stroke-width="1.6"/>
<path d="M1218 225v12M1203 240h12" stroke="#b0b3b6" stroke-dasharray="1.5 1.5"/>
<path d="M1217 243h3v-3z" fill="#444"/>
<!-- 11 annotations -->
<g stroke="#a57b1c" stroke-width="1.8"><path d="M1231 221l4 4M1235 221l-4 4M1241 221l-1.5 3.5M1237.5 230l-1.5 3.5M1234 238l-1.5 3.5"/></g>
<g stroke="#6b5a2a" stroke-width="1.2" fill="none"><path d="M1243 240v-10M1243 240h6M1243 240l-4 3"/></g>
<path d="M1250 243h3v-3z" fill="#444"/>
<!-- 12 pressed -->
<rect x="1262.5" y="221.5" width="12" height="8" fill="#fdf6da" stroke="#a9adb0"/>
<path d="M1274 226h6.5v7" fill="none" stroke="#333" stroke-width="1.4"/><path d="M1278 231h5l-2.5 3.5z" fill="#333"/>
<ellipse cx="1276.5" cy="238" rx="5.5" ry="3.3" fill="#2d2f31"/><circle cx="1276.5" cy="238" r="1.4" fill="#ddd"/>
<!-- 13 nodes -->
<path d="M1299 225l5 6h8M1304 231l-5 6" stroke="#555" stroke-width="1.3" fill="none"/>
<circle cx="1299" cy="225" r="3" fill="#7cc06c" stroke="#4b8a3c" stroke-width=".8"/>
<circle cx="1311.5" cy="231.5" r="3" fill="#e87878" stroke="#b84848" stroke-width=".8"/>
<circle cx="1298.5" cy="238" r="3" fill="#3a8ec2" stroke="#1f6e9a" stroke-width=".8"/>
<!-- 14 cubes eye -->
<g fill="#c9ebf8" stroke="#8ba3b0" stroke-width="1"><rect x="1332.5" y="221.5" width="7" height="7"/><rect x="1327.5" y="228.5" width="7" height="7"/><rect x="1334.5" y="228.5" width="7" height="7"/></g>
<ellipse cx="1340" cy="238" rx="5.5" ry="3.3" fill="#2d2f31"/><circle cx="1340" cy="238" r="1.4" fill="#ddd"/>
</svg>


<div class="t" style="left:345.5px;top:998px;font-size:13.8px;color:#959a9d;letter-spacing:0.09px">Structure : 3D : Native Mode : Default Bonded Interface</div>
<!-- WCS -->
<svg style="left:0;top:0" width="1920" height="1080">
<path d="M1810.5 1033v-121.5h110" fill="none" stroke="#4b0f82" stroke-width="1.3"/>
<text x="1813" y="927" font-family="Liberation Sans" font-size="15.5" fill="#4b0f82" textLength="37" lengthAdjust="spacingAndGlyphs">WCS</text>
<g fill="none" stroke="#4b0f82" stroke-width="1.1">
<path d="M1833.5 952l21-2.2 12.5 5.2v22.8l-20.5 2.2-13-5z"/>
<path d="M1854.5 949.8v22.6l-21 3M1854.5 972.4l12.5 5.4"/>
<path d="M1833.5 952l12 6 21-3M1845.5 958v22"/>
<path d="M1854.5 949.8l28-3.3"/>
<path d="M1882.5 941.5h8l-8 11h8"/>
<path d="M1833.5 952l33 13"/>
<path d="M1859 959l8 9M1867 958l-8 9"/>
<path d="M1833 975v42"/>
<path d="M1827.5 1006l5.5 6 4-6"/>
</g>
</svg>

<!-- status bar -->
<div class="a" style="left:0;top:1033px;width:1920px;height:1px;background:#b9bcbe"></div>
<div class="a" style="left:0;top:1034px;width:1920px;height:46px;background:#f7f9f8"></div>


<div class="a" style="left:7px;top:1045px;width:26px;height:30px;background:#e1e4e6;border:1px solid #b3b7b9"></div>
<div class="a" style="left:103px;top:1045px;width:1px;height:30px;background:#b7bbbd"></div>
<div class="a" style="left:1501px;top:1038px;width:1px;height:37px;background:#b7bbbd"></div>
<div class="a" style="left:1506px;top:1038px;width:1px;height:37px;background:#b7bbbd"></div>
<div class="a" style="left:1562px;top:1038px;width:1px;height:37px;background:#b7bbbd"></div>
<div class="a" style="left:1509px;top:1040px;width:51px;height:29px;border:1px solid #c9ccce"></div>
<div class="a" style="left:1542px;top:1040px;width:1px;height:29px;background:#c9ccce"></div>
<div class="a" style="left:1682px;top:1043px;width:217px;height:28px;background:#f8f9fa;border:1px solid #b1b5b8"></div>
<div class="a" style="left:1879px;top:1043px;width:1px;height:28px;background:#b1b5b8"></div>
<div class="t" style="left:122.0px;top:1048px;font-size:12.5px;color:#3d4145;letter-spacing:0.22px">Entering Creo Simulate for the model CONTACT.ASM...</div>
<div class="t" style="left:1691.0px;top:1050px;font-size:15px;color:#3d4145;letter-spacing:0.00px">All Selectable</div>
<svg style="left:0;top:1030px" width="1920" height="50">
<defs>
<linearGradient id="gsq" x1="0" y1="0" x2="0" y2="1"><stop offset="0" stop-color="#f4f6f7"/><stop offset="1" stop-color="#cdd5da"/></linearGradient>
<radialGradient id="gglobe" cx=".4" cy=".35" r=".7"><stop offset="0" stop-color="#9fdcf8"/><stop offset="1" stop-color="#1f7ab8"/></radialGradient>
<linearGradient id="gbin" x1="0" y1="0" x2="1" y2="0"><stop offset="0" stop-color="#333"/><stop offset=".5" stop-color="#aaa"/><stop offset="1" stop-color="#333"/></linearGradient>
</defs>
<rect x="10.5" y="20.5" width="19" height="19" fill="#f0f2f3" stroke="#9ea3a6"/>
<rect x="10.5" y="20.5" width="19" height="3" fill="#fff" stroke="#9ea3a6"/>
<rect x="11" y="25" width="5" height="14" fill="#d8eef8" stroke="#2f83b3"/>
<ellipse cx="24.5" cy="36.5" rx="5.5" ry="3.3" fill="#2d2f31"/><circle cx="24.5" cy="36.5" r="1.3" fill="#ddd"/>
<circle cx="50" cy="30" r="8" fill="url(#gglobe)"/>
<ellipse cx="50" cy="30" rx="11" ry="4.5" transform="rotate(-40 50 30)" fill="none" stroke="#333" stroke-width="1.3"/>
<rect x="70.5" y="20.5" width="19" height="19" rx="1" fill="url(#gsq)" stroke="#1f6e9a" stroke-width="1.2"/>
<circle cx="114" cy="22" r="3" fill="#1a6292"/>
<path d="M1516.5 19h6v3h5v-3h6l3 9v8h-7v-5h-5v5h-7v-8z" fill="url(#gbin)"/>
<rect x="1517" y="16" width="5" height="4" fill="#444"/><rect x="1528" y="16" width="5" height="4" fill="#444"/>
<path d="M1547 22h8.5l-4.25 4.5z" fill="#555a5e"/>
<path d="M1885 25.5h9l-4.5 4.5z" fill="#555a5e"/>
</svg>

</body></html>
